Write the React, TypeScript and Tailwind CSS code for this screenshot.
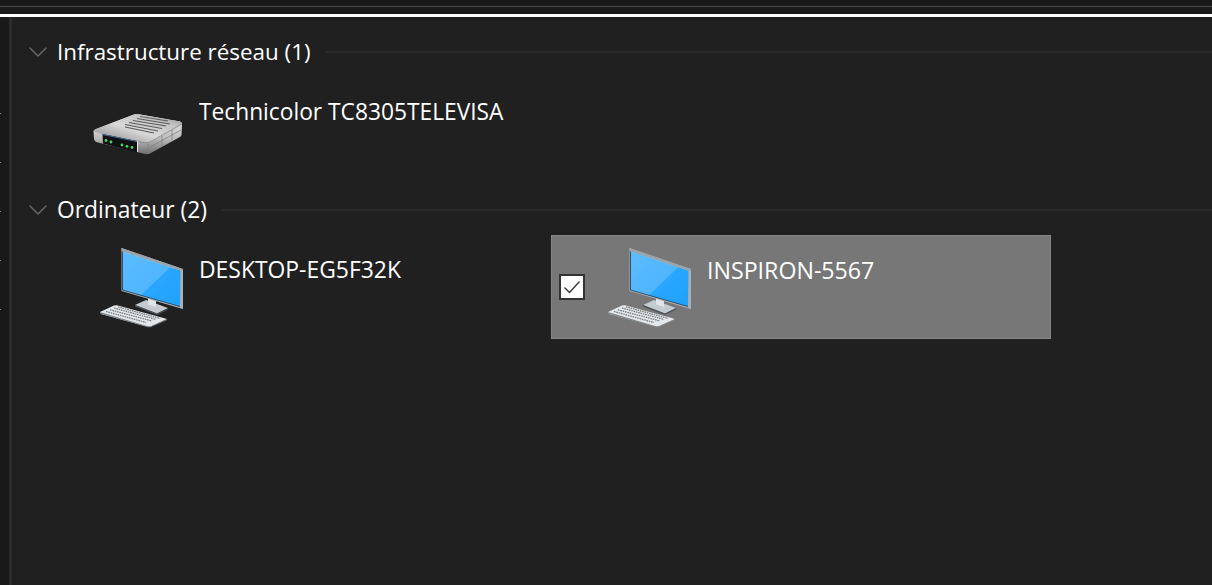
import { ChevronDown } from "lucide-react";

function RouterIcon() {
  return (
    <svg width="96" height="48" viewBox="0 0 96 48" className="shrink-0">
      <defs>
        <linearGradient id="routerTop" x1="0" y1="1" x2="1" y2="0">
          <stop offset="0" stopColor="#7f7f7f" />
          <stop offset="0.45" stopColor="#d8d8d8" />
          <stop offset="0.75" stopColor="#c4c4c4" />
          <stop offset="1" stopColor="#8e8e8e" />
        </linearGradient>
        <linearGradient id="routerSide" x1="0" y1="0" x2="0" y2="1">
          <stop offset="0" stopColor="#f2f2f2" />
          <stop offset="0.6" stopColor="#bdbdbd" />
          <stop offset="1" stopColor="#6e6e6e" />
        </linearGradient>
      </defs>
      <path d="M3.5 20 Q4 19 6 18 L44 3.5 Q46 3 50 3.6 L90 10.5 Q92 11 92 13 L91.5 24 Q91 25.5 89 26.5 L60 42.5 Q58 43.5 55 43 L8 31.5 Q4.5 30.5 4 28 Z" fill="url(#routerSide)" />
      <path d="M3.5 20 Q4 19 6 18 L44 3.5 Q46 3 50 3.6 L90 10.5 Q92 11 92 13 L60 31 Q56 32 50 31 L12 23 Z" fill="url(#routerTop)" />
      <path d="M12.5 23 L47 30 L47 41.5 L13 32.5 Z" fill="#0f1114" />
      <path d="M12.5 23 L47 30 L47 31 L12.5 24 Z" fill="#4a6d94" />
      <path d="M47 30 Q56 33 60 31 L92 13 M58 33 L58 43 M72 25 L72 35 M82 19 L82 29 M60 36 L91 19" stroke="#7c7c7c" strokeWidth="0.7" fill="none" />
      <path d="M47.5 30 L47.5 41" stroke="#e8e8e8" strokeWidth="1" />
      <g stroke="#5c5c5c" strokeWidth="1.1">
        <path d="M50 5.5 L78 10" />
        <path d="M47 7.5 L80 13" />
        <path d="M43 9.5 L76 15" />
        <path d="M39 11.5 L72 17.5" />
        <path d="M35 13.5 L68 20" />
        <path d="M35 16 L64 22" />
      </g>
      <g fill="#4fd65a">
        <circle cx="16" cy="29.5" r="1.4" />
        <circle cx="21" cy="31" r="1.4" />
        <circle cx="32" cy="34" r="1.4" />
        <circle cx="37" cy="35.3" r="1.4" />
        <circle cx="42" cy="36.5" r="1.4" />
      </g>
    </svg>
  );
}

function ComputerIcon({ id }: { id: string }) {
  return (
    <svg width="90" height="84" viewBox="0 0 90 84" className="shrink-0">
      <defs>
        <linearGradient id={`${id}Screen`} x1="0" y1="0" x2="1" y2="1">
          <stop offset="0" stopColor="#5cbcff" />
          <stop offset="0.55" stopColor="#50b6ff" />
          <stop offset="0.56" stopColor="#2aa6ff" />
          <stop offset="1" stopColor="#1ea2fb" />
        </linearGradient>
      </defs>
      <path d="M39 59 L50 54 L72 62 L61 67.5 Z" fill="#c3cbd0" />
      <path d="M39 59 L61 67.5 L72 62 L72 63.5 L61 69 L39 60.5 Z" fill="#4c5358" />
      <path d="M52 52 L60 55 L60 61 L52 58.5 Z" fill="#e0e4e6" />
      <path d="M25.5 2 L87 23 L87 63 L85 62.5 L25.5 45 Z" fill="#a9b1b6" />
      <path d="M25.5 2 L87 23 L87 25 L25.5 5 Z" fill="#9aa3a8" />
      <path d="M26.5 5.5 L84.5 24.8 L84 60.5 L26.5 44 Z" fill={`url(#${id}Screen)`} />
      <path d="M26.5 5.5 L26.5 44 L84 60.5" stroke="#1d3a52" strokeWidth="0.8" fill="none" />
      <path d="M4 66 L18 59.5 Q20 59 22 59.5 L71 73 L55 80.5 Q53 81 51 80.5 L5 68 Z" fill="#e4e7e9" />
      <path d="M4 66 L5 68 L51 81 Q53 81.5 55 81 L71 74 L71 73 L55 80 Q53 80.5 51 80 Z" fill="#7f878c" />
      <g stroke="#70787d" strokeWidth="1.2" strokeDasharray="1.6 0.8">
        <path d="M10 65.5 L50 76.5" />
        <path d="M14 63.8 L56 75" />
        <path d="M18 62 L60 73.5" />
        <path d="M22 60.8 L64 72.5" />
      </g>
    </svg>
  );
}

function GroupHeader({ label, labelClass }: { label: string; labelClass: string }) {
  return (
    <div className="flex h-9 items-center">
      <ChevronDown size={32} strokeWidth={1} className="ml-[22px] shrink-0 text-[#6a6a6a]" />
      <span className={`ml-[3px] leading-none whitespace-nowrap text-white ${labelClass}`}>{label}</span>
      <div className="ml-[14px] h-0.5 flex-1 bg-[#2a2a2a]" />
    </div>
  );
}

export default function App() {
  return (
    <div className="flex h-[585px] w-[1212px] flex-col overflow-hidden bg-[#202020] font-['Open_Sans',sans-serif]">
      <div className="h-[14px] shrink-0 bg-[#1a1a1a] pt-[6px]">
        <div className="h-px bg-[#4b4b4b]" />
      </div>
      <div className="h-[3px] shrink-0 bg-white" />
      <div className="flex min-h-0 flex-1">
        <div className="flex w-[9px] shrink-0 flex-col gap-[48px] bg-[#191919] pt-[96px]">
          {[0, 1, 2, 3, 4].map((i) => (
            <div key={i} className="h-px w-px bg-[#888888]" />
          ))}
        </div>
        <div className="w-[3px] shrink-0 bg-[#2b2b2b]" />
        <div className="flex-1 pt-[17px] -ml-3">
          <GroupHeader label="Infrastructure réseau (1)" labelClass="text-[22.4px]" />
          <div className="mt-[7px] mb-[11px] flex h-[104px] pl-[43px]">
            <div className="flex w-[500px] items-start">
              <div className="mt-[34px] ml-[47px] w-[109px]">
                <RouterIcon />
              </div>
              <span className="mt-[20px] text-[22.75px] leading-[30px] whitespace-nowrap text-white">Technicolor TC8305TELEVISA</span>
            </div>
          </div>
          <GroupHeader label="Ordinateur (2)" labelClass="text-[22.8px]" />
          <div className="mt-[7px] flex gap-2 pl-[43px]">
            <div className="flex h-[104px] w-[500px] items-start">
              <div className="mt-[11px] ml-[53px] w-[103px]">
                <ComputerIcon id="desktop" />
              </div>
              <span className="mt-[20px] text-[22.9px] leading-[30px] whitespace-nowrap text-white">DESKTOP-EG5F32K</span>
            </div>
            <div className="relative flex h-[104px] w-[500px] items-start border border-[#858585] bg-[#777777]">
              <div className="absolute top-[38px] left-[7px] flex h-[26px] w-[26px] items-center justify-center border-2 border-[#333333] bg-white">
                <svg width="18" height="14" viewBox="0 0 18 14">
                  <path d="M1.5 7.5 L6.5 12.5 L16.5 1.5" stroke="#333333" strokeWidth="1.3" fill="none" />
                </svg>
              </div>
              <div className="mt-[10px] ml-[52px] w-[103px]">
                <ComputerIcon id="inspiron" />
              </div>
              <span className="mt-[19px] text-[23.2px] leading-[30px] whitespace-nowrap text-white">INSPIRON-5567</span>
            </div>
          </div>
        </div>
      </div>
    </div>
  );
}
